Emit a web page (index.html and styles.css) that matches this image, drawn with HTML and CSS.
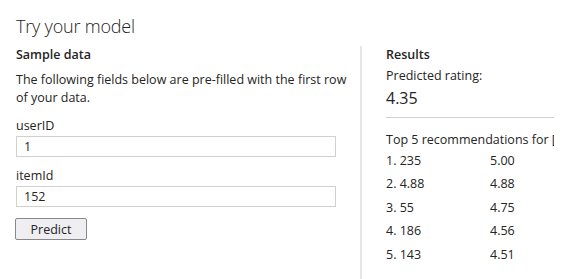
FILE: index.html
```html
<!DOCTYPE html>
<html lang="en">
<head>
  <meta charset="UTF-8" />
  <title>Try your model</title>
  <link rel="stylesheet" href="styles.css">
</head>
<body>
  <div class="page">
    <h1>Try your model</h1>

    <div class="columns">
      <div class="sample">
        <h2>Sample data</h2>
        <p class="intro">The following fields below are pre-filled with the first row of your data.</p>

        <label class="field-label" for="userID">userID</label>
        <input class="field" id="userID" type="text" value="1">

        <label class="field-label" for="itemId">itemId</label>
        <input class="field" id="itemId" type="text" value="152">

        <button class="predict-btn">Predict</button>
      </div>

      <div class="results">
        <h2>Results</h2>
        <div class="rating-label">Predicted rating:</div>
        <div class="rating">4.35</div>
        <div class="top-title">Top 5 recommendations for [userID]</div>
        <div class="recs">
          <span>1. 235</span><span>5.00</span>
          <span>2. 4.88</span><span>4.88</span>
          <span>3. 55</span><span>4.75</span>
          <span>4. 186</span><span>4.56</span>
          <span>5. 143</span><span>4.51</span>
        </div>
      </div>
    </div>
  </div>
</body>
</html>
```

FILE: styles.css
```css
body {
  margin: 0;
  font-family: 'Segoe UI', 'Open Sans', sans-serif;
  font-size: 12.5px;
  color: #252423;
  background: #fff;
  overflow: hidden;
}

.page {
  padding: 12px 16px 0;
}

h1 {
  margin: 0;
  font-size: 18px;
  font-weight: 300;
  letter-spacing: -0.2px;
  line-height: 28px;
}

h2 {
  margin: 0;
  font-size: 12.5px;
  font-weight: 600;
  line-height: 18px;
}

.columns {
  display: flex;
  margin-top: 6px;
  height: 245px;
}

.sample {
  width: 320px;
  padding-right: 24px;
}

.intro {
  margin: 7px -14px 10px 0;
  line-height: 18px;
}

.field-label {
  display: block;
  line-height: 18px;
  margin-bottom: 1px;
}

.field {
  display: block;
  box-sizing: border-box;
  width: 320px;
  height: 21px;
  margin: 0 0 10px;
  padding: 0 7px;
  border: 1px solid #d2d0ce;
  font-family: inherit;
  font-size: 12.5px;
  color: #252423;
}

.predict-btn {
  margin-top: 1px;
  margin-left: -1px;
  width: 72px;
  height: 22px;
  padding: 0;
  background: #efeff3;
  border: 1px solid #8a8886;
  border-radius: 2px;
  font-family: inherit;
  font-size: 12.5px;
  color: #252423;
}

.results {
  flex: 1;
  min-width: 0;
  border-left: 2px solid #e6e6ea;
  padding-left: 24px;
  overflow: hidden;
}

.rating-label {
  margin-top: 3px;
  line-height: 18px;
}

.rating {
  margin-top: 1px;
  font-size: 16px;
  line-height: 24px;
  padding-bottom: 7px;
  border-bottom: 1px solid #d2d0ce;
}

.top-title {
  margin-top: 13px;
  line-height: 18px;
  white-space: nowrap;
}

.recs {
  display: grid;
  grid-template-columns: 104px auto;
  row-gap: 5.4px;
  margin-top: 3px;
  line-height: 18px;
}
```
